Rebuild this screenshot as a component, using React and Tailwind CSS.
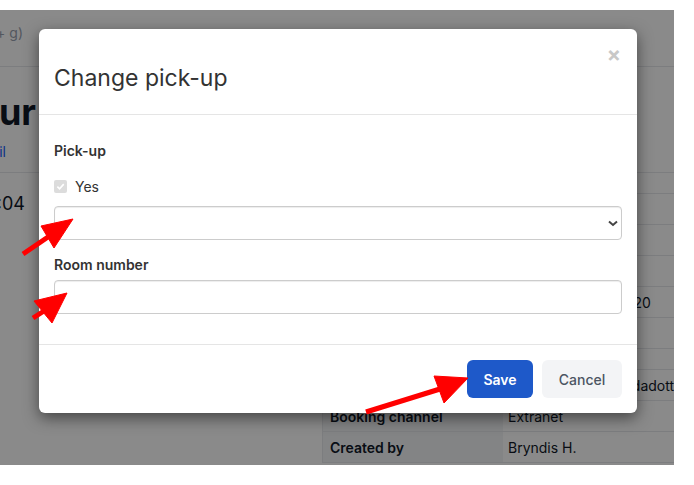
import { useState } from 'react';

const ROWS = [
  { label: 'Tour', value: 'Northern Lights', h: 'h-[21px]' },
  { label: 'Date', value: 'Tuesday 18. August', h: 'h-[31px]' },
  { label: 'Guests', value: '2 adults', h: 'h-[31px]' },
  { label: 'Language', value: 'English', h: 'h-[31px]' },
  { label: 'Pick-up time', value: 'Friday 6 August 2020', h: 'h-[31px]' },
  { label: 'Pick-up', value: 'Yes', h: 'h-[31px]' },
  { label: 'Room number', value: '', h: 'h-[21px]' },
  { label: 'Customer', value: 'Kristbjörg Guðmundadottir', h: 'h-[31px]' },
  { label: 'Booking channel', value: 'Extranet', h: 'h-[31px]' },
  { label: 'Created by', value: 'Bryndis H.', h: 'h-[31px]' },
];

function Arrows() {
  return (
    <svg className="absolute inset-0 pointer-events-none" width="694" height="485" viewBox="0 0 694 485">
      <g fill="#ff0000" stroke="#ff0000">
        <line x1="23" y1="254" x2="48" y2="237" strokeWidth="5" />
        <polygon points="73,219 41,226 54,248" strokeWidth="1" />
        <line x1="33" y1="318" x2="44" y2="311" strokeWidth="5" />
        <polygon points="67,293 34,301 52,323" strokeWidth="1" />
        <line x1="366" y1="412" x2="440" y2="389" strokeWidth="5" />
        <polygon points="468,378 434,376 444,403" strokeWidth="1" />
      </g>
    </svg>
  );
}

function PickupModal() {
  const [room, setRoom] = useState('');
  return (
    <div className="ml-[39px] mt-[19px] w-[598px] bg-white rounded-[6px] shadow-[0_5px_15px_rgba(0,0,0,0.5)] relative">
      {/* Header */}
      <div className="h-[86px] border-b border-[#e5e5e5] px-[15px] pt-[35px]">
        <h4 className="text-[23px] leading-[28px] text-[#333]">Change pick-up</h4>
      </div>
      <button className="absolute right-[16px] top-[12px] text-[21px] font-bold leading-[28px] text-[#c8c8c8]">×</button>

      {/* Body */}
      <div className="px-[15px] pt-[26px] pb-[30px] border-b border-[#e5e5e5]">
        <div className="text-[14px] leading-[20px] font-semibold text-[#333]">Pick-up</div>
        <label className="mt-[15px] flex items-center gap-[8px] h-[20px] text-[14px] text-[#333]">
          <span className="w-[13px] h-[13px] rounded-[2px] bg-[#dcdcdc] flex items-center justify-center">
            <svg width="9" height="9" viewBox="0 0 10 10">
              <path d="M1.5 5.2 L4 7.6 L8.6 2.4" fill="none" stroke="#fff" strokeWidth="1.8" />
            </svg>
          </span>
          Yes
        </label>
        <div className="mt-[10px] relative">
          <select className="appearance-none w-full h-[34px] border border-[#cccccc] rounded-[4px] bg-white shadow-[inset_0_1px_1px_rgba(0,0,0,0.075)] px-[12px] text-[14px]">
            <option></option>
          </select>
          <svg className="absolute right-[4px] top-[14px] pointer-events-none" width="10" height="7" viewBox="0 0 10 7">
            <path d="M1 1.5 L5 5 L9 1.5" fill="none" stroke="#444" strokeWidth="2" />
          </svg>
        </div>
        <div className="mt-[15px] text-[14px] leading-[20px] font-semibold text-[#333]">Room number</div>
        <input
          value={room}
          onChange={(e) => setRoom(e.target.value)}
          className="mt-[5px] block w-full h-[34px] border border-[#cccccc] rounded-[4px] shadow-[inset_0_1px_1px_rgba(0,0,0,0.075)] px-[12px] text-[14px] outline-none"
        />
      </div>

      {/* Footer */}
      <div className="flex justify-end gap-[9px] px-[15px] pt-[15px] pb-[15px]">
        <button className="w-[66px] h-[38px] rounded-[6px] bg-[#1e59c9] text-white text-[14px] font-semibold">Save</button>
        <button className="w-[80px] h-[38px] rounded-[6px] bg-[#f3f4f6] text-[#4b5563] text-[14px] font-medium">Cancel</button>
      </div>
    </div>
  );
}

export default function App() {
  return (
    <div className="relative w-[694px] h-[485px] bg-white overflow-hidden font-['Inter',sans-serif]">
      <div className="pt-[10px]">
        <div className="relative w-[674px] h-[455px] bg-white overflow-hidden">
          {/* Page behind */}
          <div className="h-[57px] border-b border-gray-200 pt-[13px]">
            <div className="w-[23px] flex justify-end whitespace-nowrap text-[14px] leading-[20px] text-gray-400">
              Search (ctrl + g)
            </div>
          </div>
          <div className="flex">
            <div className="w-[322px] shrink-0">
              <div className="mt-[25px] w-[36px] flex justify-end whitespace-nowrap text-[36px] leading-[40px] font-bold text-gray-900">
                Your
              </div>
              <div className="mt-[10px] w-[6px] flex justify-end whitespace-nowrap text-[14px] leading-[20px] text-blue-600">
                Send email
              </div>
              <div className="mt-[10px] border-t border-gray-200 pt-[17px]">
                <div className="w-[25px] flex justify-end whitespace-nowrap text-[18px] leading-[28px] text-gray-900">
                  10:04
                </div>
              </div>
            </div>
            <div className="mt-[105px] w-[420px] shrink-0 border-l border-t border-gray-200">
              {ROWS.map((r) => (
                <div key={r.label} className={`flex border-b border-gray-200 ${r.h}`}>
                  <div className="w-[180px] shrink-0 bg-gray-100 px-[7px] flex items-center text-[14px] font-semibold text-gray-900 whitespace-nowrap">
                    {r.label}
                  </div>
                  <div className="flex-1 px-[5px] flex items-center text-[14px] text-gray-900 whitespace-nowrap">
                    {r.value}
                  </div>
                </div>
              ))}
            </div>
          </div>

          {/* Modal overlay */}
          <div className="absolute inset-0">
            <div className="absolute inset-0 bg-black/[0.46]" />
            <div className="relative">
              <PickupModal />
            </div>
          </div>
        </div>
      </div>
      <Arrows />
    </div>
  );
}
